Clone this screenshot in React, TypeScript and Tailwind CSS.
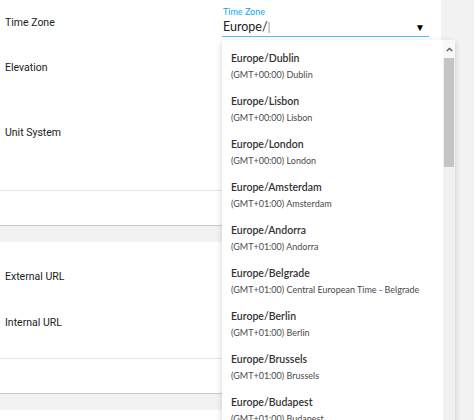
import React from 'react';

interface Zone {
  id: string;
  desc: string;
}

const zones: Zone[] = [
  { id: 'Europe/Dublin', desc: '(GMT+00:00) Dublin' },
  { id: 'Europe/Lisbon', desc: '(GMT+00:00) Lisbon' },
  { id: 'Europe/London', desc: '(GMT+00:00) London' },
  { id: 'Europe/Amsterdam', desc: '(GMT+01:00) Amsterdam' },
  { id: 'Europe/Andorra', desc: '(GMT+01:00) Andorra' },
  { id: 'Europe/Belgrade', desc: '(GMT+01:00) Central European Time - Belgrade' },
  { id: 'Europe/Berlin', desc: '(GMT+01:00) Berlin' },
  { id: 'Europe/Brussels', desc: '(GMT+01:00) Brussels' },
  { id: 'Europe/Budapest', desc: '(GMT+01:00) Budapest' },
];

function Row({ label, h }: { label: string; h: string }) {
  return (
    <div className={`flex items-center pl-[5px] text-[10.5px] text-[#212121] ${h}`}>{label}</div>
  );
}

export default function App() {
  return (
    <div
      className="relative w-[474px] h-[420px] overflow-hidden bg-[#f2f2f2]"
      style={{ fontFamily: 'Roboto, "Liberation Sans", sans-serif' }}
    >
      {/* General card */}
      <div className="w-[441px] bg-white border-b border-[#c9c9c9]">
        <div className="pb-[14px]">
          <Row label="Time Zone" h="h-[45px]" />
          <Row label="Elevation" h="h-[45px]" />
          <Row label="Unit System" h="h-[86px]" />
        </div>
        <div className="border-t border-[#e3e3e3] h-[35px]" />
      </div>

      {/* URL card */}
      <div className="mt-[16px] w-[441px] bg-white border-b border-[#c9c9c9]">
        <div className="pt-[12px] pb-[12px]">
          <Row label="External URL" h="h-[46px]" />
          <Row label="Internal URL" h="h-[46px]" />
        </div>
        <div className="border-t border-[#e3e3e3] h-[35px]" />
      </div>

      <div className="mt-[16px] w-[441px] h-[40px] bg-white" />

      {/* Time zone combo box */}
      <div className="absolute left-[222px] top-[6px] w-[207px]" style={{ fontFamily: 'Lato, "Open Sans", sans-serif' }}>
        <div className="text-[9px] leading-[12px] text-[#03a9f4] pl-[1px]">Time Zone</div>
        <div className="flex items-center justify-between h-[19px] border-b-[1.5px] border-[#4fc3f7]">
          <span className="text-[12.5px] text-[#212121] pl-[1px]">
            Europe/<span className="font-light">|</span>
          </span>
          <span className="text-[10px] text-black pr-[4px]">▼</span>
        </div>
      </div>

      <div
        className="absolute left-[222px] top-[40px] w-[233px] h-[390px] bg-white flex shadow-[0_2px_6px_rgba(0,0,0,0.18)]"
        style={{ fontFamily: 'Lato, "Open Sans", sans-serif' }}
      >
        <div className="flex-1 pt-[4px]">
          {zones.map((z) => (
            <div key={z.id} className="h-[43px] pl-[9px] pt-[8px]">
              <div className="text-[10.5px] leading-[12px] font-semibold text-[#333]">{z.id}</div>
              <div className="mt-[5px] text-[9px] leading-[12px] text-[#4a4a4a]">{z.desc}</div>
            </div>
          ))}
        </div>
        <div className="w-[12px] bg-[#f1f1f1] flex flex-col">
          <div className="h-[18px] bg-[#f8f8f8] flex items-center justify-center">
            <svg width="7" height="5" viewBox="0 0 7 5">
              <path d="M0.8 4 L3.5 1.3 L6.2 4" fill="none" stroke="#555" strokeWidth="1.3" />
            </svg>
          </div>
          <div className="mx-[1px] h-[109px] bg-[#c4c4c4]" />
        </div>
      </div>
    </div>
  );
}
